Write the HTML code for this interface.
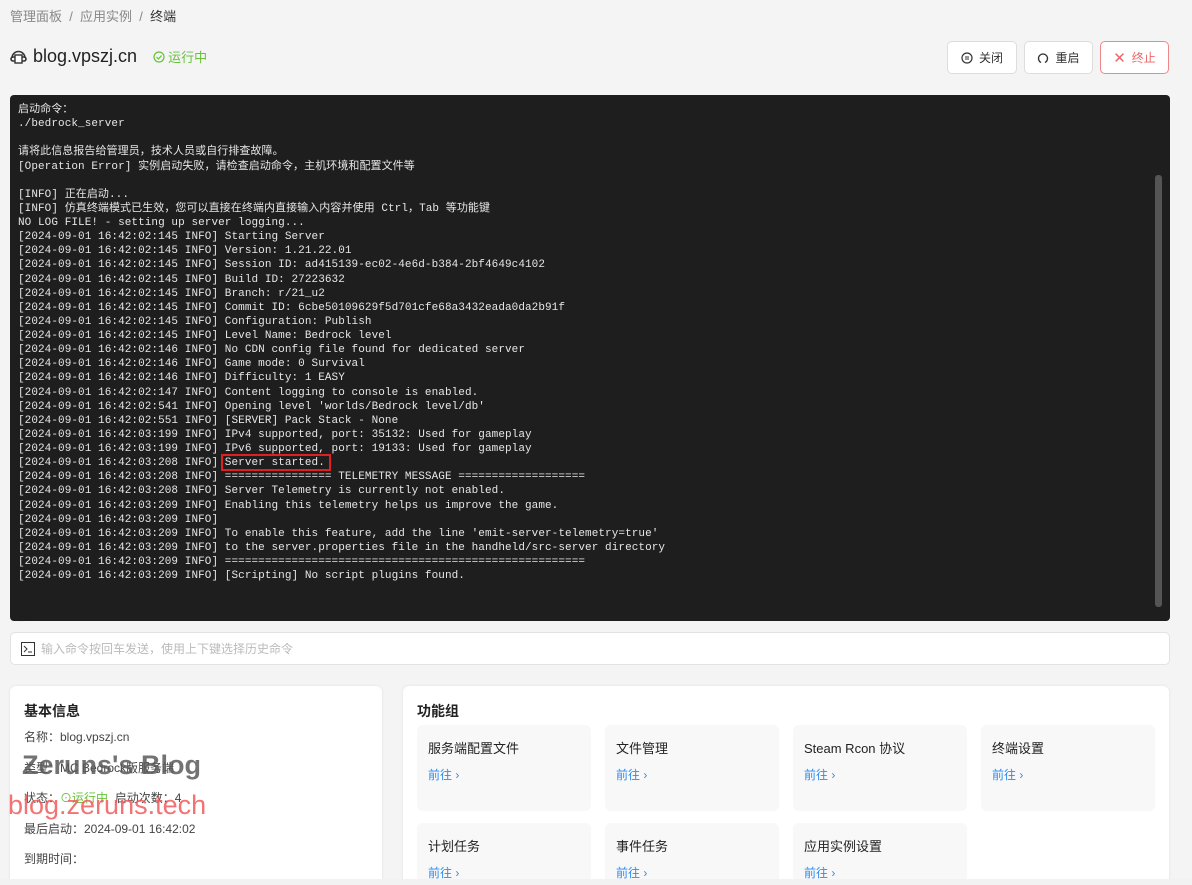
<!DOCTYPE html>
<html style="overflow:hidden;height:885px"><head><meta charset="utf-8"><style>
*{box-sizing:border-box;margin:0;padding:0}
body{width:1192px;height:885px;overflow:hidden;background:#f4f4f4;font-family:"Liberation Sans","Noto Sans CJK SC",sans-serif;color:#333;position:relative}
.abs{position:absolute}
.crumb{left:10px;top:6px;font-size:13px;color:#888}
.crumb b{font-weight:normal;color:#333}
.title{left:10px;top:46px;font-size:18px;color:#222;display:flex;align-items:center;gap:6px}
.run{color:#67c23a;font-size:13px;margin-left:10px;display:flex;align-items:center;gap:3px}
.btn{top:41px;height:33px;border:1px solid #ddd;border-radius:5px;background:#fff;font-size:12px;display:flex;align-items:center;justify-content:center;gap:6px;color:#333}
.term{left:10px;top:95px;width:1160px;height:526px;background:#1e1e1e;border-radius:4px}
pre{position:absolute;left:18px;top:103px;font-family:"Liberation Mono","Noto Sans CJK SC",monospace;font-size:11px;letter-spacing:.07px;line-height:14.12px;color:#e6e6e6}
.sb{left:1155px;top:175px;width:7px;height:432px;background:#555;border-radius:3px}
.inp{left:10px;top:632px;width:1160px;height:33px;background:#fff;border:1px solid #e2e2e2;border-radius:5px;font-size:12px;color:#bbb;display:flex;align-items:center;padding-left:10px;gap:6px}
.card{background:#fff;border-radius:6px;box-shadow:0 0 3px rgba(0,0,0,.08);overflow:hidden}
.h{font-size:14px;font-weight:bold;color:#222}
.info{font-size:12px;color:#444}
.tile{width:174px;height:86px;background:#f8f8f8;border-radius:6px}
.tile .t{position:absolute;left:11px;top:13px;font-size:13px;color:#222}
.tile .g{position:absolute;left:11px;top:41px;font-size:12px;color:#2d8cf0}
</style></head><body>
<div class="abs crumb">管理面板 &nbsp;/&nbsp; 应用实例 &nbsp;/&nbsp; <b>终端</b></div>
<div class="abs title"><svg width="17" height="15" viewBox="0 0 17 15"><path d="M2 9a6.5 6.5 0 0 1 13 0" fill="none" stroke="#333" stroke-width="1.6"/><rect x="1" y="8" width="15" height="4" rx="2" fill="none" stroke="#333" stroke-width="1.6"/><rect x="5" y="6" width="7" height="8" fill="#fff" stroke="#333" stroke-width="1.4"/></svg>blog.vpszj.cn<span class="run"><svg width="12" height="12" viewBox="0 0 12 12"><circle cx="6" cy="6" r="5" fill="none" stroke="#67c23a" stroke-width="1.2"/><path d="M3.5 6l2 2 3-3.5" fill="none" stroke="#67c23a" stroke-width="1.2"/></svg>运行中</span></div>
<div class="abs btn" style="left:947px;width:70px"><svg width="12" height="12"><circle cx="6" cy="6" r="5" fill="none" stroke="#333" stroke-width="1.2"/><path d="M5 4v4M7 4v4" stroke="#333"/></svg>关闭</div>
<div class="abs btn" style="left:1024px;width:69px"><svg width="12" height="12"><path d="M4 10.5A4.5 4.5 0 1 1 8 10.5" fill="none" stroke="#333" stroke-width="1.3"/></svg>重启</div>
<div class="abs btn" style="left:1100px;width:69px;border-color:#e88;color:#e66"><span style="font-size:15px">✕</span>终止</div>
<div class="abs term"></div>
<div class="abs sb"></div>
<pre>启动命令：
./bedrock_server

请将此信息报告给管理员，技术人员或自行排查故障。
[Operation Error] 实例启动失败，请检查启动命令，主机环境和配置文件等

[INFO] 正在启动...
[INFO] 仿真终端模式已生效，您可以直接在终端内直接输入内容并使用 Ctrl，Tab 等功能键
NO LOG FILE! - setting up server logging...
[2024-09-01 16:42:02:145 INFO] Starting Server
[2024-09-01 16:42:02:145 INFO] Version: 1.21.22.01
[2024-09-01 16:42:02:145 INFO] Session ID: ad415139-ec02-4e6d-b384-2bf4649c4102
[2024-09-01 16:42:02:145 INFO] Build ID: 27223632
[2024-09-01 16:42:02:145 INFO] Branch: r/21_u2
[2024-09-01 16:42:02:145 INFO] Commit ID: 6cbe50109629f5d701cfe68a3432eada0da2b91f
[2024-09-01 16:42:02:145 INFO] Configuration: Publish
[2024-09-01 16:42:02:145 INFO] Level Name: Bedrock level
[2024-09-01 16:42:02:146 INFO] No CDN config file found for dedicated server
[2024-09-01 16:42:02:146 INFO] Game mode: 0 Survival
[2024-09-01 16:42:02:146 INFO] Difficulty: 1 EASY
[2024-09-01 16:42:02:147 INFO] Content logging to console is enabled.
[2024-09-01 16:42:02:541 INFO] Opening level 'worlds/Bedrock level/db'
[2024-09-01 16:42:02:551 INFO] [SERVER] Pack Stack - None
[2024-09-01 16:42:03:199 INFO] IPv4 supported, port: 35132: Used for gameplay
[2024-09-01 16:42:03:199 INFO] IPv6 supported, port: 19133: Used for gameplay
[2024-09-01 16:42:03:208 INFO] Server started.
[2024-09-01 16:42:03:208 INFO] ================ TELEMETRY MESSAGE ===================
[2024-09-01 16:42:03:208 INFO] Server Telemetry is currently not enabled.
[2024-09-01 16:42:03:209 INFO] Enabling this telemetry helps us improve the game.
[2024-09-01 16:42:03:209 INFO]
[2024-09-01 16:42:03:209 INFO] To enable this feature, add the line 'emit-server-telemetry=true'
[2024-09-01 16:42:03:209 INFO] to the server.properties file in the handheld/src-server directory
[2024-09-01 16:42:03:209 INFO] ======================================================
[2024-09-01 16:42:03:209 INFO] [Scripting] No script plugins found.


_</pre>
<div class="abs" style="left:221px;top:454px;width:110px;height:17px;border:2px solid #e02020"></div>
<div class="abs inp"><svg width="14" height="14"><rect x=".5" y=".5" width="13" height="13" fill="none" stroke="#333"/><path d="M3 4l3 3-3 3M7 10h4" stroke="#333" fill="none"/></svg>输入命令按回车发送，使用上下键选择历史命令</div>
<div class="abs card" style="left:10px;top:686px;width:372px;height:199px">
<div class="abs h" style="left:14px;top:15px">基本信息</div>
<div class="abs info" style="left:14px;top:42px">名称：blog.vpszj.cn</div>
<div class="abs info" style="left:14px;top:73px">类型：MC Bedrock版服务端</div>
<div class="abs info" style="left:14px;top:103px">状态：<span style="color:#67c23a">⊙运行中</span>&nbsp; 启动次数：4</div>
<div class="abs info" style="left:14px;top:134px">最后启动：2024-09-01 16:42:02</div>
<div class="abs info" style="left:14px;top:164px">到期时间：</div>
</div>
<div class="abs" style="left:22px;top:750px;font-size:27px;font-weight:bold;color:rgba(90,90,90,.85)">Zeruns's Blog</div>
<div class="abs" style="left:8px;top:790px;font-size:27px;color:rgba(240,90,90,.85)">blog.zeruns.tech</div>
<div class="abs card" style="left:403px;top:686px;width:766px;height:199px">
<div class="abs h" style="left:14px;top:15px">功能组</div>
<div class="abs tile" style="left:14px;top:39px"><div class="t">服务端配置文件</div><div class="g">前往 ›</div></div>
<div class="abs tile" style="left:202px;top:39px"><div class="t">文件管理</div><div class="g">前往 ›</div></div>
<div class="abs tile" style="left:390px;top:39px"><div class="t">Steam Rcon 协议</div><div class="g">前往 ›</div></div>
<div class="abs tile" style="left:578px;top:39px"><div class="t">终端设置</div><div class="g">前往 ›</div></div>
<div class="abs tile" style="left:14px;top:137px"><div class="t">计划任务</div><div class="g">前往 ›</div></div>
<div class="abs tile" style="left:202px;top:137px"><div class="t">事件任务</div><div class="g">前往 ›</div></div>
<div class="abs tile" style="left:390px;top:137px"><div class="t">应用实例设置</div><div class="g">前往 ›</div></div>
</div>
<div class="abs" style="left:0;top:879px;width:1192px;height:6px;background:#f2f2f2"></div>
</body></html>
